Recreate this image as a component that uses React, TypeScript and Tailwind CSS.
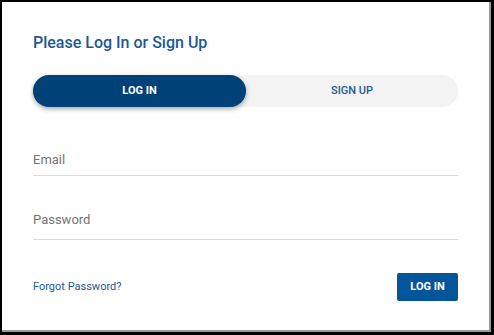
import React from "react";

export default function App() {
  return (
    <div className="w-[494px] h-[335px] bg-black pt-[2px] pl-[2px] overflow-hidden" style={{ fontFamily: "Roboto, 'Liberation Sans', sans-serif" }}>
      <div className="w-[489px] h-[330px] bg-white border-r-2 border-b-2 border-[#9a9a9a] px-[31px] pt-[31px] flex flex-col">
        <h1 className="text-[16px] leading-[20px] font-medium text-[#1d5895]">Please Log In or Sign Up</h1>
        <div className="mt-[22px] h-[32px] rounded-full bg-[#f3f3f3] flex">
          <button className="w-[213px] h-[32px] rounded-full bg-[#004277] text-white text-[11px] font-bold shadow-[0_2px_5px_rgba(0,0,0,0.35)]">LOG IN</button>
          <button className="flex-1 h-[32px] rounded-full text-[#1d5895] text-[11px] font-medium">SIGN UP</button>
        </div>
        <div className="mt-[40px] border-b border-[#dcdcdc] pb-[4px]">
          <span className="text-[13px] leading-[16px] text-[#757575]">Email</span>
        </div>
        <div className="mt-[31px] border-b border-[#dcdcdc] pb-[8px]">
          <span className="text-[13px] leading-[16px] text-[#757575]">Password</span>
        </div>
        <div className="mt-[33px] flex items-center justify-between">
          <a className="text-[11px] text-[#1d5895]">Forgot Password?</a>
          <button className="w-[61px] h-[28px] rounded-[2px] bg-[#03569a] text-white text-[11px] font-bold">LOG IN</button>
        </div>
      </div>
    </div>
  );
}
